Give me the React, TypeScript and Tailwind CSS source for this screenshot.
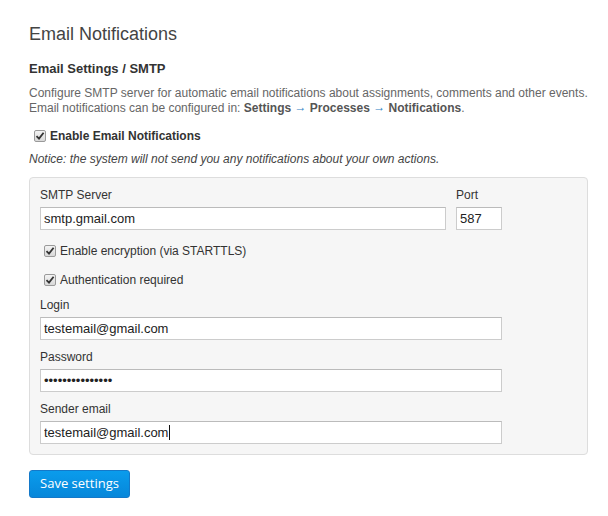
import React from 'react';

function Check({ label, bold }: { label: string; bold?: boolean }) {
  return (
    <label className="flex items-center gap-[4px] h-[16px]">
      <span className="w-[12px] h-[12px] rounded-[2px] border border-[#9a9a9a] bg-gradient-to-b from-[#f4f4f4] to-[#d8d8d8] flex items-center justify-center">
        <svg width="10" height="10" viewBox="0 0 10 10">
          <path d="M1.5 5.2 L4 7.6 L8.6 1.8" fill="none" stroke="#333" strokeWidth="1.8" />
        </svg>
      </span>
      <span className={bold ? 'font-bold text-[#333]' : 'text-[#333]'}>{label}</span>
    </label>
  );
}

function Field({ label, value, width, type, caret }: { label: string; value: string; width: string; type?: string; caret?: boolean }) {
  return (
    <div className="flex flex-col">
      <div className="text-[12px] text-[#333] h-[15px] leading-[15px]">{label}</div>
      <div className="relative mt-[4px]">
        <input
          readOnly
          type={type || 'text'}
          value={value}
          className={`${width} block h-[23px] border border-[#ccc] border-t-[#bbb] bg-white px-[3px] text-[13px] text-[#222] outline-none`}
        />
        {caret && <span className="absolute left-[129px] top-[4px] w-[1px] h-[15px] bg-[#111]" />}
      </div>
    </div>
  );
}

function Arrow() {
  return <span className="relative -top-[1px] text-[#2f7fc4]"> → </span>;
}

export default function App() {
  return (
    <div className="bg-white w-[608px] h-[516px] pl-[29px] pt-[23px] font-['Liberation_Sans',Arial,sans-serif] text-[#555]">
      <h1 className="text-[18px] leading-[22px] text-[#444]">Email Notifications</h1>
      <h2 className="mt-[16px] text-[13px] leading-[16px] font-bold text-[#333]">Email Settings / SMTP</h2>
      <p className="mt-[9px] text-[12px] leading-[15px] text-[#666]">
        Configure SMTP server for automatic email notifications about assignments, comments and other events.
        <br />
        Email notifications can be configured in: <b className="text-[#555]">Settings</b>
        <Arrow />
        <b className="text-[#555]">Processes</b>
        <Arrow />
        <b className="text-[#555]">Notifications</b>.
      </p>
      <div className="mt-[12px] pl-[5px] text-[12px]">
        <Check label="Enable Email Notifications" bold />
      </div>
      <p className="mt-[8px] text-[12px] leading-[15px] italic text-[#444]">
        Notice: the system will not send you any notifications about your own actions.
      </p>
      <div className="mt-[10px] w-[559px] h-[278px] rounded-[4px] border border-[#ddd] bg-[#f6f6f6] pl-[10px] pt-[10px]">
        <div className="flex gap-[10px]">
          <Field label="SMTP Server" value="smtp.gmail.com" width="w-[406px]" />
          <Field label="Port" value="587" width="w-[46px]" />
        </div>
        <div className="mt-[13px] pl-[4px] text-[12px]">
          <Check label="Enable encryption (via STARTTLS)" />
        </div>
        <div className="mt-[13px] pl-[4px] text-[12px]">
          <Check label="Authentication required" />
        </div>
        <div className="mt-[10px] flex flex-col gap-[10px]">
          <Field label="Login" value="testemail@gmail.com" width="w-[462px]" />
          <Field label="Password" value="testpassword123" type="password" width="w-[462px]" />
          <Field label="Sender email" value="testemail@gmail.com" width="w-[462px]" caret />
        </div>
      </div>
      <button className="mt-[15px] h-[28px] w-[101px] rounded-[3px] border border-[#1479c9] bg-gradient-to-b from-[#0a9cec] to-[#0787da] font-['Open_Sans',sans-serif] text-[13px] text-white">
        Save settings
      </button>
    </div>
  );
}
